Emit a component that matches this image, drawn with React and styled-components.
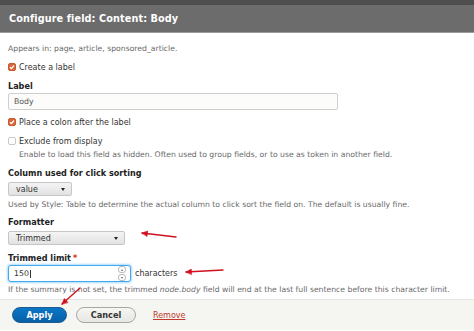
import styled, { createGlobalStyle } from 'styled-components';

const GlobalStyle = createGlobalStyle`
  html, body {
    margin: 0;
    padding: 0;
    background: #ffffff;
  }
  body {
    font-family: "DejaVu Sans", "Liberation Sans", sans-serif;
  }
`;

const Page = styled.div`
  position: relative;
  width: 474px;
  height: 331px;
  overflow: hidden;
  background: #ffffff;
  color: #333;
`;

const TopStrip = styled.div`
  height: 5px;
  background: #4e4e4e;
`;

const Header = styled.div`
  height: 27px;
  display: flex;
  align-items: center;
  padding-left: 9px;
  background: #6c6c6c;
  border-bottom: 1px solid #9a9a9a;
  color: #ffffff;
  font-weight: bold;
  font-size: 9.7px;
  letter-spacing: 0.1px;
`;

const Content = styled.div`
  padding: 11px 8px 0 8px;
  display: flex;
  flex-direction: column;
`;

const Text = styled.div`
  font-size: 7.7px;
  line-height: 10px;
  height: 10px;
  color: ${(p) => (p.muted ? '#6a6a6a' : '#333')};
  margin-top: ${(p) => p.gap || 0}px;
  padding-left: ${(p) => p.indent || 0}px;
  white-space: nowrap;
  em {
    font-style: italic;
  }
`;

const FieldLabel = styled.div`
  font-size: 8.1px;
  font-weight: bold;
  line-height: 10px;
  height: 10px;
  color: #222;
  margin-top: ${(p) => p.gap || 0}px;
  span {
    color: #e62600;
    margin-left: 2px;
  }
`;

const CheckRow = styled.label`
  display: flex;
  align-items: center;
  gap: 3px;
  height: 10px;
  font-size: 8px;
  color: #333;
  margin-top: ${(p) => p.gap || 0}px;
`;

const Box = styled.span`
  width: 8px;
  height: 8px;
  box-sizing: border-box;
  border-radius: 2px;
  display: inline-flex;
  align-items: center;
  justify-content: center;
  background: ${(p) => (p.checked ? '#d9673b' : '#fdfdfd')};
  border: 1px solid ${(p) => (p.checked ? '#c9592f' : '#c8c8c8')};
`;

const TextInput = styled.div`
  box-sizing: border-box;
  width: ${(p) => p.w}px;
  height: 17px;
  margin-top: 2px;
  padding-left: 5px;
  display: flex;
  align-items: center;
  font-size: 7.8px;
  color: #555;
  background: #fcfcfa;
  border: 1px solid #cfcfcf;
  border-radius: 2px;
`;

const Select = styled.div`
  box-sizing: border-box;
  width: ${(p) => p.w}px;
  height: 14px;
  margin-top: 4px;
  padding: 0 6px 0 7px;
  display: flex;
  align-items: center;
  justify-content: space-between;
  font-size: 8px;
  color: #333;
  background: linear-gradient(#f4f4f4, #e2e2e2);
  border: 1px solid #c6c6c6;
  border-radius: 2px;
  &::after {
    content: '';
    border-left: 2.5px solid transparent;
    border-right: 2.5px solid transparent;
    border-top: 3px solid #222;
  }
`;

const InlineRow = styled.div`
  display: flex;
  align-items: center;
  gap: 4px;
  margin-top: 2px;
`;

const NumberInput = styled.div`
  box-sizing: border-box;
  width: 123px;
  height: 17px;
  padding: 0 4px 0 5px;
  display: flex;
  align-items: center;
  justify-content: space-between;
  font-size: 7.8px;
  color: #333;
  background: #ffffff;
  border: 1px solid #40a9f0;
  border-radius: 3px;
  box-shadow: 0 0 2px 1px rgba(90, 180, 250, 0.5);
`;

const Caret = styled.span`
  display: inline-block;
  width: 1px;
  height: 8px;
  background: #333;
  margin-left: 1px;
  vertical-align: middle;
`;

const Spinner = styled.span`
  display: flex;
  flex-direction: column;
  gap: 1px;
`;

const SpinBtn = styled.span`
  width: 6px;
  height: 5px;
  border: 1px solid #b9b9b9;
  border-radius: 3px;
  display: flex;
  align-items: center;
  justify-content: center;
  &::after {
    content: '';
    border-left: 1.5px solid transparent;
    border-right: 1.5px solid transparent;
    ${(p) => (p.up ? 'border-bottom' : 'border-top')}: 2px solid #666;
  }
`;

const Suffix = styled.span`
  font-size: 8px;
  color: #333;
`;

const Footer = styled.div`
  margin-top: 4px;
  height: 31px;
  box-sizing: border-box;
  padding-left: 12px;
  display: flex;
  align-items: center;
  gap: 9px;
  background: #f5f5f2;
  border-top: 1px solid #e4e4e0;
`;

const Button = styled.div`
  box-sizing: border-box;
  width: ${(p) => p.w}px;
  height: 16px;
  border-radius: 8px;
  display: flex;
  align-items: center;
  justify-content: center;
  font-size: 8.2px;
  font-weight: bold;
  color: ${(p) => (p.primary ? '#ffffff' : '#333')};
  background: ${(p) =>
    p.primary ? 'linear-gradient(#0a76c6, #0860a8)' : 'linear-gradient(#f6f6f3, #e6e6e2)'};
  border: 1px solid ${(p) => (p.primary ? '#1e5c90' : '#a6a6a6')};
`;

const RemoveLink = styled.a`
  margin-left: 8px;
  font-size: 8px;
  color: #c0392b;
  text-decoration: underline;
`;

const Annotations = styled.svg`
  position: absolute;
  left: 0;
  top: 0;
  pointer-events: none;
`;

function Check() {
  return (
    <svg width="6" height="6" viewBox="0 0 6 6">
      <path d="M1 3.2 L2.5 4.6 L5 1.5" fill="none" stroke="#fff" strokeWidth="1.3" />
    </svg>
  );
}

function Arrow({ x1, y1, x2, y2 }) {
  const a = Math.atan2(y2 - y1, x2 - x1);
  const len = 6;
  const spread = 0.45;
  const p1 = [x2 - len * Math.cos(a - spread), y2 - len * Math.sin(a - spread)];
  const p2 = [x2 - len * Math.cos(a + spread), y2 - len * Math.sin(a + spread)];
  return (
    <g stroke="#d0101e" strokeWidth="1.4" fill="#d0101e" strokeLinecap="round">
      <line x1={x1} y1={y1} x2={x2} y2={y2} />
      <polygon points={`${x2},${y2} ${p1[0]},${p1[1]} ${p2[0]},${p2[1]}`} strokeWidth="0.6" />
    </g>
  );
}

export default function App() {
  return (
    <>
      <GlobalStyle />
      <Page>
        <TopStrip />
        <Header>Configure field: Content: Body</Header>
        <Content>
          <Text muted>Appears in: page, article, sponsored_article.</Text>
          <CheckRow gap={8}>
            <Box checked><Check /></Box>
            Create a label
          </CheckRow>
          <FieldLabel gap={9}>Label</FieldLabel>
          <TextInput w={330}>Body</TextInput>
          <CheckRow gap={7}>
            <Box checked><Check /></Box>
            Place a colon after the label
          </CheckRow>
          <CheckRow gap={9}>
            <Box />
            Exclude from display
          </CheckRow>
          <Text muted gap={4} indent={11}>
            Enable to load this field as hidden. Often used to group fields, or to use as token in another field.
          </Text>
          <FieldLabel gap={8}>Column used for click sorting</FieldLabel>
          <Select w={64}>value</Select>
          <Text muted gap={4}>
            Used by Style: Table to determine the actual column to click sort the field on. The default is usually fine.
          </Text>
          <FieldLabel gap={7}>Formatter</FieldLabel>
          <Select w={117}>Trimmed</Select>
          <FieldLabel gap={8}>
            Trimmed limit<span>*</span>
          </FieldLabel>
          <InlineRow>
            <NumberInput>
              <span>
                150<Caret />
              </span>
              <Spinner>
                <SpinBtn up />
                <SpinBtn />
              </Spinner>
            </NumberInput>
            <Suffix>characters</Suffix>
          </InlineRow>
          <Text muted gap={3}>
            If the summary is not set, the trimmed <em>node.body</em> field will end at the last full sentence before this character limit.
          </Text>
        </Content>
        <Footer>
          <Button primary w={55}>Apply</Button>
          <Button w={60}>Cancel</Button>
          <RemoveLink>Remove</RemoveLink>
        </Footer>
        <Annotations width="474" height="331" viewBox="0 0 474 331">
          <Arrow x1={176} y1={237} x2={142} y2={233} />
          <Arrow x1={223} y1={270} x2={186} y2={272} />
          <Arrow x1={80} y1={288} x2={62} y2={304} />
        </Annotations>
      </Page>
    </>
  );
}
